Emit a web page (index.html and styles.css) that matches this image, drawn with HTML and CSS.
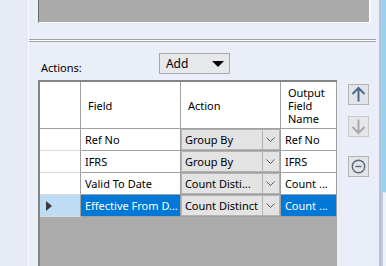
FILE: index.html
```html
<!DOCTYPE html>
<html lang="en">
<head>
    <meta charset="UTF-8">
    <title>Summarize - Actions</title>
    <link rel="stylesheet" href="styles.css">
</head>
<body>
    <div class="window">
        <div class="rail"></div>
        <div class="panel">
            <div class="preview"></div>
            <div class="rule"></div>
            <div class="actions-bar">
                <span class="actions-label">Actions:</span>
                <div class="add-select">
                    <span>Add</span>
                    <span class="caret"></span>
                </div>
            </div>
            <div class="grid-area">
                <div class="grid">
                    <div class="cell rowhead head"></div>
                    <div class="cell head">Field</div>
                    <div class="cell head">Action</div>
                    <div class="cell head">Output Field Name</div>

                    <div class="cell rowhead"></div>
                    <div class="cell">Ref No</div>
                    <div class="cell combo-cell">
                        <div class="combo"><span class="combo-text">Group By</span><span class="combo-btn"><svg width="9" height="5" viewBox="0 0 9 5"><path d="M0.5 0.5 L4.5 4.5 L8.5 0.5" fill="none" stroke="#5a5a5a" stroke-width="1"/></svg></span></div>
                    </div>
                    <div class="cell">Ref No</div>

                    <div class="cell rowhead"></div>
                    <div class="cell">IFRS</div>
                    <div class="cell combo-cell">
                        <div class="combo"><span class="combo-text">Group By</span><span class="combo-btn"><svg width="9" height="5" viewBox="0 0 9 5"><path d="M0.5 0.5 L4.5 4.5 L8.5 0.5" fill="none" stroke="#5a5a5a" stroke-width="1"/></svg></span></div>
                    </div>
                    <div class="cell">IFRS</div>

                    <div class="cell rowhead"></div>
                    <div class="cell">Valid To Date</div>
                    <div class="cell combo-cell">
                        <div class="combo"><span class="combo-text">Count Disti...</span><span class="combo-btn"><svg width="9" height="5" viewBox="0 0 9 5"><path d="M0.5 0.5 L4.5 4.5 L8.5 0.5" fill="none" stroke="#5a5a5a" stroke-width="1"/></svg></span></div>
                    </div>
                    <div class="cell">Count ...</div>

                    <div class="cell rowhead current"><span class="marker"></span></div>
                    <div class="cell selected">Effective From D...</div>
                    <div class="cell combo-cell">
                        <div class="combo"><span class="combo-text">Count Distinct</span><span class="combo-btn"><svg width="9" height="5" viewBox="0 0 9 5"><path d="M0.5 0.5 L4.5 4.5 L8.5 0.5" fill="none" stroke="#5a5a5a" stroke-width="1"/></svg></span></div>
                    </div>
                    <div class="cell selected">Count ...</div>
                </div>
                <div class="tools">
                    <button class="tool-btn" title="Move up">
                        <svg width="19" height="19" viewBox="0 0 19 19"><path d="M9.5 16.5 V3 M3.5 9 L9.5 3 L15.5 9" fill="none" stroke="#4c6a8e" stroke-width="2"/></svg>
                    </button>
                    <button class="tool-btn disabled" title="Move down">
                        <svg width="19" height="19" viewBox="0 0 19 19"><path d="M9.5 2.5 V16 M3.5 10 L9.5 16 L15.5 10" fill="none" stroke="#a9a9a9" stroke-width="2"/></svg>
                    </button>
                    <button class="tool-btn remove" title="Remove">
                        <svg width="19" height="19" viewBox="0 0 19 19"><circle cx="9.5" cy="9.5" r="6.2" fill="none" stroke="#5d6674" stroke-width="1.4"/><path d="M6.5 9.5 H12.5" stroke="#5d6674" stroke-width="1.4"/></svg>
                    </button>
                </div>
            </div>
        </div>
        <div class="edge"><div class="edge-window"></div></div>
    </div>
</body>
</html>
```

FILE: styles.css
```css
body {
    margin: 0;
    font-family: "Noto Sans", "Open Sans", sans-serif;
    font-size: 11px;
    color: #000;
    background-color: #eaeef8;
    overflow: hidden;
}
.window {
    display: flex;
    width: 386px;
    height: 266px;
    overflow: hidden;
}
.rail {
    width: 28px;
    background-color: #e7ebf5;
    border-right: 1px solid #f7f9fd;
}
.panel {
    width: 351px;
    padding-left: 9px;
    box-sizing: border-box;
    background-color: #eaeef8;
}
.preview {
    width: 333px;
    height: 23px;
    box-sizing: border-box;
    background-color: #aaaaaa;
    border-left: 1px solid #6c6c6c;
    border-right: 2px solid #fafafa;
    border-bottom: 1px solid #fafafa;
}
.rule {
    margin: 16px 0 0 -9px;
    width: 347px;
    height: 3px;
    box-sizing: border-box;
    background-color: #fdfdfd;
    border-top: 1px solid #a2a2a2;
    border-bottom: 1px solid #a2a2a2;
}
.actions-bar {
    display: flex;
    align-items: flex-end;
    height: 21px;
    margin-top: 11px;
}
.actions-label {
    width: 118px;
    padding-left: 3px;
    line-height: 14px;
    margin-bottom: -1px;
}
.add-select {
    display: flex;
    align-items: center;
    justify-content: space-between;
    width: 71px;
    height: 21px;
    box-sizing: border-box;
    padding: 0 4px 0 6px;
    background-color: #e6e8ec;
    border: 1px solid #a9a9a9;
    font-size: 12px;
}
.caret {
    width: 0;
    height: 0;
    border-left: 6px solid transparent;
    border-right: 6px solid transparent;
    border-top: 6px solid #000;
    margin-right: 1px;
}
.grid-area {
    display: flex;
    align-items: flex-start;
    margin-top: 6px;
}
.grid {
    display: grid;
    grid-template-columns: 41px 100px 100px 56px;
    grid-template-rows: 47px repeat(4, 22px);
    align-content: start;
    width: 299px;
    height: 186px;
    box-sizing: border-box;
    background-color: #ababab;
    border-top: 2px solid #858585;
    border-left: 2px solid #858585;
}
.cell {
    box-sizing: border-box;
    background-color: #fff;
    border-right: 1px solid #a0a0a0;
    border-bottom: 1px solid #a0a0a0;
    padding-left: 4px;
    display: flex;
    align-items: center;
    white-space: nowrap;
    overflow: hidden;
}
.cell.head {
    padding-left: 7px;
    white-space: normal;
    line-height: 13px;
}
.cell.rowhead {
    border-bottom-color: #dadada;
}
.cell.rowhead.head {
    border-bottom-color: #a0a0a0;
}
.cell.current {
    background-color: #bedcf3;
    padding-left: 6px;
}
.marker {
    width: 0;
    height: 0;
    border-top: 5px solid transparent;
    border-bottom: 5px solid transparent;
    border-left: 6px solid #3c3c3c;
}
.cell.selected {
    background-color: #0078d7;
    color: #fff;
}
.combo-cell {
    padding-left: 0;
    background-color: #a8a8a8;
}
.combo {
    display: flex;
    width: 99px;
    height: 21px;
    box-sizing: border-box;
    background-color: #e3e3e3;
    border: 1px solid #b2b2b2;
    border-right-width: 1px;
}
.combo-text {
    flex: 1;
    padding-left: 3px;
    line-height: 19px;
}
.combo-btn {
    width: 16px;
    border-left: 1px solid #b2b2b2;
    display: flex;
    align-items: center;
    justify-content: center;
}
.tools {
    display: flex;
    flex-direction: column;
    margin-left: 11px;
    padding-top: 4px;
}
.tool-btn {
    width: 21px;
    height: 21px;
    padding: 0;
    margin-bottom: 11px;
    display: flex;
    align-items: center;
    justify-content: center;
    background-color: #e1e4e9;
    border: 1px solid #b4b4b4;
}
.tool-btn.disabled {
    background-color: #e4e6ea;
    border-color: #c9c9c9;
}
.tool-btn.remove {
    margin-top: 8px;
}
.edge {
    width: 7px;
    box-sizing: border-box;
    background-color: #9ad2f0;
    border-left: 2px solid #b7c0d8;
    border-right: 0;
    padding-top: 192px;
}
.edge-window {
    height: 74px;
    margin-left: 1px;
    background-color: #eef3f9;
    border-left: 1px solid #c9cfd8;
    border-top: 1px solid #d7e4f1;
}
```
